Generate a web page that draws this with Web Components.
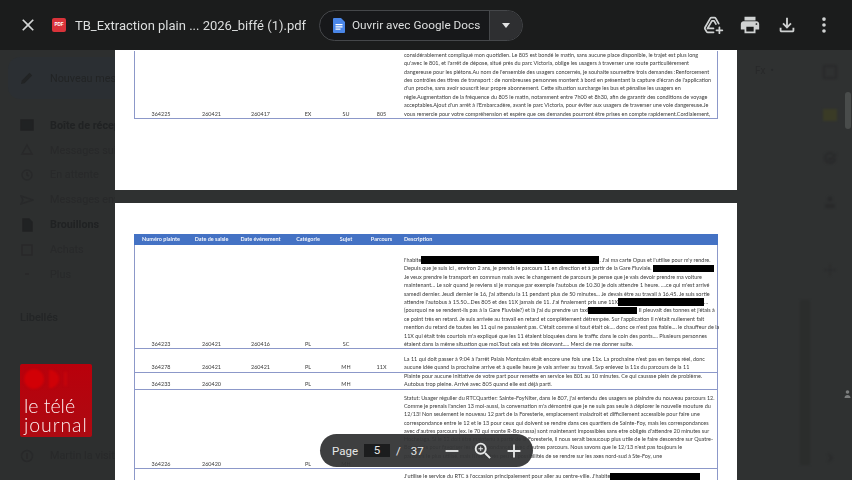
<!DOCTYPE html>
<html lang="fr">
<head>
<meta charset="utf-8">
<title>TB_Extraction</title>
<style>
  html, body { margin: 0; height: 480px; overflow: hidden; background: #2f3131; }
</style>
</head>
<body>
<pdf-app>
  <top-bar slot="top"></top-bar>
  <mail-sidebar slot="left"></mail-sidebar>
  <div slot="center">
    <pdf-page kind="first">
      <pdf-table>
        <pl-row a="364225" b="260421" c="260417" d="EX" e="SU" f="805" last>
          <div>considérablement compliqué mon quotidien. Le 805 est bondé le matin, sans aucune place disponible, le trajet est plus long</div>
          <div>qu'avec le 801, et l'arrêt de dépose, situé près du parc Victoria, oblige les usagers à traverser une route particulièrement</div>
          <div>dangereuse pour les piétons.Au nom de l'ensemble des usagers concernés, je souhaite soumettre trois demandes :Renforcement</div>
          <div>des contrôles des titres de transport : de nombreuses personnes montent à bord en présentant la capture d'écran de l'application</div>
          <div>d'un proche, sans avoir souscrit leur propre abonnement. Cette situation surcharge les bus et pénalise les usagers en</div>
          <div>règle.Augmentation de la fréquence du 805 le matin, notamment entre 7h00 et 8h30, afin de garantir des conditions de voyage</div>
          <div>acceptables.Ajout d'un arrêt à l'Embarcadère, avant le parc Victoria, pour éviter aux usagers de traverser une voie dangereuse.Je</div>
          <div>vous remercie pour votre compréhension et espère que ces demandes pourront être prises en compte rapidement.Cordialement,</div>
        </pl-row>
      </pdf-table>
    </pdf-page>
    <pdf-page kind="second">
      <pdf-table>
        <pl-head></pl-head>
        <pl-row a="364223" b="260421" c="260416" d="PL" e="SC" style="--top:11px">
          <div>l'habite<black-out w="178"></black-out>. J'ai ma carte Opus et l'utilise pour m'y rendre.</div>
          <div>Depuis que je suis ici , environ 2 ans, je prends le parcours 11 en direction et à partir de la Gare Fluviale. <black-out w="61"></black-out></div>
          <div>Je veux prendre le transport en commun mais avec le changement de parcours je pense que je vais devoir prendre ma voiture</div>
          <div>maintenant... Le soir quand je reviens si je manque par exemple l'autobus de 10.30 je dois attendre 1 heure. ....ce qui m'est arrivé</div>
          <div>samedi dernier. Jeudi dernier le 16, j'ai attendu la 11 pendant plus de 50 minutes... Je devais être au travail à 16.45. Je suis sortie</div>
          <div>attendre l'autobus à 15.50...Des 805 et des 11X jamais de 11. J'ai finalement pris une 11X<black-out w="86"></black-out>...</div>
          <div>(pourquoi ne se rendent-ils pas à la Gare Fluviale?) et là j'ai du prendre un taxi<black-out w="49"></black-out> Il pleuvait des tonnes et j'étais à</div>
          <div>ce point très en retard. Je suis arrivée au travail en retard et complètement détrempée. Sur l'application il n'était nullement fait</div>
          <div>mention du retard de toutes les 11 qui ne passaient pas. C'était comme si tout était ok.... donc ce n'est pas fiable.... le chauffeur de la</div>
          <div>11X qui était très courtois m'a expliqué que les 11 étaient bloquées dans le traffic dans le coin des ponts.... Plusieurs personnes</div>
          <div>étaient dans la même situation que moi.Tout cela est très décevant..... Merci de me donner suite.</div>
        </pl-row>
        <pl-row a="364278" b="260421" c="260421" d="PL" e="MH" f="11X" style="--top:7px;line-height:7.800px">
          <div>La 11 qui doit passer à 9:04 à l'arrêt Palais Montcalm était encore une fois une 11x. La prochaine n'est pas en temps réel, donc</div>
          <div>aucune idée quand la prochaine arrive et à quelle heure je vais arriver au travail. Svp enlevez la 11x du parcours de la 11</div>
        </pl-row>
        <pl-row a="364233" b="260420" d="PL" e="MH" style="line-height:7.800px">
          <div>Plainte pour aucune initiative de votre part pour remette en service les 801 au 10 minutes. Ce qui caussse plein de problème.</div>
          <div>Autobus trop pleine. Arrivé avec 805 quand elle est déjà parti.</div>
        </pl-row>
        <pl-row a="364226" b="260420" d="PL" e="MH" style="--top:4px;line-height:8.300px">
          <div>Statut: Usager régulier du RTCQuartier: Sainte-FoyNlter, dans le 807, j'ai entendu des usagers se plaindre du nouveau parcours 12.</div>
          <div>Comme je prenais l'ancien 13 moi-aussi, la conversation m'a démontré que je ne suis pas seule à déplorer le nouvelle mouture du</div>
          <div>12/13! Non seulement le nouveau 12 part de la Foresterie, emplacement maladroit et difficilement accessible pour faire une</div>
          <div>correspondance entre le 12 et le 13 pour ceux qui doivent se rendre dans ces quartiers de Sainte-Foy, mais les correspondances</div>
          <div>avec d'autres parcours (ex. le 70 qui monte R-Bourassa) sont maintenant impossibles sans etre obligés d'attendre 20 minutes sur</div>
          <div>Hochelaga. Si le 12 doit être maintenu à partir de la Foresterie, il nous serait beaucoup plus utile de le faire descendre sur Quatre-</div>
          <div>Bourgeois pour favoriser les correspondances avec d'autres parcours. Nous savons que le 12/13 n'est pas toujours le</div>
          <div>parcours le plus utilisé, mais il reste très peu de possibilités de se rendre sur les axes nord-sud à Ste-Foy, une</div>
          <div>&nbsp;</div>
        </pl-row>
        <pl-row style="--top:3px">
          <div>J'utilise le service du RTC à l'occasion principalement pour aller au centre-ville. J'habite<black-out w="90"></black-out></div>
        </pl-row>
      </pdf-table>
    </pdf-page>
  </div>
  <mail-rail slot="right"></mail-rail>
  <tele-logo slot="over"></tele-logo>
  <page-pill slot="over"></page-pill>
</pdf-app>

<script>
// petit helper pour les composants
function mount(el, html) {
  el.attachShadow({ mode: 'open' }).innerHTML = html;
}

class PdfApp extends HTMLElement {
  connectedCallback() {
    mount(this, `
      <style>
        :host { display: grid; grid-template: 50px 430px / 115px 622px 115px; width: 852px; height: 480px; position: relative; overflow: hidden; font-family: Roboto, sans-serif; }
        .top { grid-column: 1 / 4; display: block; }
        .center { display: block; overflow: hidden; }
      </style>
      <slot name="top" class="top"></slot>
      <slot name="left"></slot>
      <div class="center"><slot name="center"></slot></div>
      <slot name="right"></slot>
      <slot name="over"></slot>
    `);
  }
}

class TopBar extends HTMLElement {
  connectedCallback() {
    mount(this, `
      <style>
        :host { display: flex; align-items: center; height: 50px; box-sizing: border-box; background: #1b1c1c; color: #dcdede; padding-left: 18px; font: 13px Roboto, sans-serif; }
        svg { display: block; filter: blur(.35px); }
        .x { width: 20px; height: 20px; fill: #d4d6d6; margin-right: 14px; }
        .pdf { width: 14px; height: 14px; background: #d9333a; border-radius: 2px; color: #fff; font: bold 4.600px/14px "Liberation Sans", sans-serif; text-align: center; margin-right: 9px; }
        .name { width: 232px; white-space: nowrap; margin-right: 12px; filter: blur(.3px); }
        .open { display: flex; align-items: center; width: 204px; height: 31px; box-sizing: border-box; border: 1px solid #45474a; border-radius: 16px; overflow: hidden; background: #17181a; }
        .open .docs { width: 12px; height: 15px; margin-left: 13px; }
        .open span { margin-left: 7px; width: 130px; white-space: nowrap; font-size: 11.800px; filter: blur(.3px); }
        .caret { margin-left: auto; width: 33px; height: 100%; background: #2e2f31; display: flex; align-items: center; justify-content: center; border-left: 1px solid #45474a; box-sizing: border-box; }
        .caret i { border: 4.500px solid transparent; border-top: 5px solid #e1e3e3; border-bottom: 0; }
        .tools { margin-left: auto; display: flex; align-items: center; margin-right: 17px; }
        .tools svg { width: 22px; height: 22px; fill: #d0d2d2; }
        .tools svg + svg { margin-left: 15px; }
      </style>
      <svg class="x" viewBox="0 0 24 24"><path d="M19 6.410 17.590 5 12 10.590 6.410 5 5 6.410 10.590 12 5 17.590 6.410 19 12 13.410 17.590 19 19 17.590 13.410 12z"/></svg>
      <div class="pdf">PDF</div>
      <div class="name">TB_Extraction plain ... 2026_biffé (1).pdf</div>
      <div class="open">
        <svg class="docs" viewBox="0 0 12 15"><path fill="#4a86e8" d="M1 0h7l4 4v10a1 1 0 0 1-1 1H1a1 1 0 0 1-1-1V1a1 1 0 0 1 1-1z"/><path fill="#fff" d="M2.500 6h7v1.200h-7zM2.500 8.300h7v1.200h-7zM2.500 10.600h5v1.200h-5z"/></svg>
        <span>Ouvrir avec Google Docs</span>
        <div class="caret"><i></i></div>
      </div>
      <div class="tools">
        <svg viewBox="0 0 24 24" style="fill:none;stroke:#d0d2d2;stroke-width:1.900;stroke-linejoin:round;stroke-linecap:round"><path d="M12.600 20H6.400a1.600 1.600 0 0 1-1.400-.8L3.300 16.300a1.600 1.600 0 0 1 0-1.600L9 4.800a1.600 1.600 0 0 1 1.400-.8h3.200a1.600 1.600 0 0 1 1.400.8l3.200 5.700"/><path d="M6 15.800 10.800 7.500h2.400l2 3.500M6 15.800h6.500"/><path d="M19 14.500v6.500M15.800 17.800h6.400"/></svg>
        <svg viewBox="0 0 24 24"><path d="M19 8H5c-1.660 0-3 1.340-3 3v6h4v4h12v-4h4v-6c0-1.660-1.340-3-3-3zm-3 11H8v-5h8v5zm3-7c-.55 0-1-.45-1-1s.45-1 1-1 1 .45 1 1-.45 1-1 1zm-1-9H6v4h12V3z"/></svg>
        <svg viewBox="0 0 24 24"><path d="M12 16l-5-5 1.400-1.450 2.600 2.600V4h2v8.150l2.600-2.600L17 11l-5 5zm-6 4c-.55 0-1.020-.2-1.410-.59A1.930 1.930 0 0 1 4 18v-3h2v3h12v-3h2v3c0 .55-.2 1.020-.59 1.410-.39.39-.86.59-1.410.59H6z"/></svg>
        <svg viewBox="0 0 24 24"><circle cx="12" cy="5.500" r="2"/><circle cx="12" cy="12" r="2"/><circle cx="12" cy="18.500" r="2"/></svg>
      </div>
    `);
  }
}

class SideItem extends HTMLElement {
  connectedCallback() {
    const ic = this.getAttribute('icon') || '';
    mount(this, `
      <style>
        :host { display: flex; align-items: center; height: 24.800px; padding-left: 20px; white-space: nowrap; }
        svg { width: 14px; height: 14px; margin-right: 16px; flex: none; fill: none; stroke: currentColor; stroke-width: 1.500; }
        :host([strong]) { font-weight: 700; color: #202223; }
        :host([strong]) svg { fill: currentColor; }
      </style>
      <svg viewBox="0 0 14 14"><path d="${ic}"/></svg><slot></slot>
    `);
  }
}

class MailSidebar extends HTMLElement {
  connectedCallback() {
    mount(this, `
      <style>
        :host { display: block; background: #2d2f2f; color: #28292a; font: 10.800px Roboto, sans-serif; overflow: hidden; filter: blur(.7px); }
        .compose { height: 42px; margin: 7px 0 14px 8px; background: #2b2f33; border-radius: 12px 0 0 12px; display: flex; align-items: center; padding-left: 12px; white-space: nowrap; color: #222425; }
        .compose svg { width: 14px; height: 14px; margin-right: 16px; fill: currentColor; flex: none; }
        .lab { font-size: 11px; font-weight: 500; margin: 24px 0 0 20px; color: #232526; }
        .foot { margin-top: 120px; }
      </style>
      <div class="compose"><svg viewBox="0 0 14 14"><path d="M1 13l.8-3.500L9.500 1.800l2.700 2.700-7.700 7.700z"/></svg>Nouveau message</div>
      <side-item strong icon="M1 2h12v10H1z">Boîte de réception</side-item>
      <side-item icon="M7 2l5 9H2z">Messages suivis</side-item>
      <side-item icon="M2 7a5 5 0 1 0 10 0a5 5 0 1 0-10 0M7 4v3l2 1">En attente</side-item>
      <side-item icon="M1 3l12 4-12 4 2-4z">Messages envoyés</side-item>
      <side-item strong icon="M3 1h6l3 3v9H3z">Brouillons</side-item>
      <side-item icon="M2 3h10v10H2z">Achats</side-item>
      <side-item icon="M5 7h4">Plus</side-item>
      <div class="lab">Libellés</div>
      <div class="foot"><side-item icon="M1.500 7a5.500 5.500 0 1 0 11 0a5.500 5.500 0 1 0-11 0M7 4v6">Martin la visite</side-item></div>
    `);
  }
}

class MailRail extends HTMLElement {
  connectedCallback() {
    mount(this, `
      <style>
        :host { display: grid; grid-template-columns: 63px 10px 40px 2px; background: #2f3131; color: #28292a; position: relative; font: 10px Roboto, sans-serif; }
        .fx { padding: 15px 0 0 18px; filter: blur(.7px); }
        .band { margin-top: 250px; height: 165px; background: #2b2d2c; filter: blur(1px); }
        .icons { position: relative; display: flex; flex-direction: column; align-items: center; filter: blur(.8px); }
        .icons svg { width: 14px; height: 14px; display: block; fill: currentColor; flex: none; }
        .bar { position: absolute; left: 108px; top: 42px; width: 6px; height: 37px; border-radius: 3px; background: #494c4b; filter: blur(.4px); }
        .me { position: absolute; left: 107px; top: 340px; width: 7px; height: 8px; fill: #7c7e7e; filter: blur(.4px); }
      </style>
      <div class="fx">Fx &nbsp;•</div>
      <div class="band"></div>
      <div class="icons">
        <svg viewBox="0 0 14 14" style="margin-top:15px;fill:none;stroke:currentColor;stroke-width:1.500"><path d="M1 1h12v12H1z"/></svg>
        <svg viewBox="0 0 14 14" style="margin-top:29px;color:#3a3b26"><path d="M0 1h14v12H0z"/></svg>
        <svg viewBox="0 0 14 14" style="margin-top:29px;fill:none;stroke:currentColor;stroke-width:2"><path d="M12 7a5 5 0 1 1-2-4M5 7l2 2 6-6"/></svg>
        <svg viewBox="0 0 14 14" style="margin-top:30px"><circle cx="7" cy="4" r="2.500"/><path d="M2 13V9h10v4z"/></svg>
        <svg viewBox="0 0 14 14" style="margin-top:54px;fill:none;stroke:currentColor;stroke-width:1"><path d="M7 1v12M1 7h12"/></svg>
        <svg viewBox="0 0 14 14" style="margin-top:174px;fill:none;stroke:currentColor;stroke-width:1.500"><path d="M5 3l4 4-4 4"/></svg>
      </div>
      <div class="bar"></div>
      <svg class="me" viewBox="0 0 7 8"><circle cx="3.500" cy="2" r="1.800"/><path d="M.5 8c0-4 6-4 6 0z"/></svg>
    `);
  }
}

class PdfPage extends HTMLElement {
  connectedCallback() {
    mount(this, `
      <style>
        :host { display: flex; flex-direction: column; background: #fff; overflow: hidden; padding: 0 19px 0 19px; box-sizing: border-box; }
        :host([kind="first"]) { height: 140px; justify-content: flex-end; padding-bottom: 71px; margin-bottom: 13px; }
        :host([kind="second"]) { height: 277px; padding-top: 31px; }
      </style>
      <slot></slot>
    `);
  }
}

class PdfTable extends HTMLElement {
  connectedCallback() {
    mount(this, `
      <style>
        :host { display: block; flex: none; border: solid #8c98c9; border-width: 0 1px; font: 5.470px/8.400px Lato, sans-serif; color: #3a3a3a; white-space: nowrap; }
        div { filter: blur(.38px); }
      </style>
      <div><slot></slot></div>
    `);
  }
}

class PlHead extends HTMLElement {
  connectedCallback() {
    const cols = ['Numéro plainte', 'Date de saisie', 'Date événement', 'Catégorie', 'Sujet', 'Parcours', 'Description'];
    mount(this, `
      <style>
        :host { display: grid; grid-template-columns: 52px 49px 49px 46px 30px 41px 1fr; height: 11px; background: #4472c4; color: #f3f5fb; font-weight: 700; line-height: 11px; margin: 0 -1px; padding-left: 1px; }
        span { text-align: center; }
        span:last-child { text-align: left; padding-left: 2px; }
      </style>
      ${cols.map(c => `<span>${c}</span>`).join('')}
    `);
  }
}

class PlRow extends HTMLElement {
  connectedCallback() {
    const vals = ['a', 'b', 'c', 'd', 'e', 'f'].map(k => this.getAttribute(k) || '');
    mount(this, `
      <style>
        :host { display: grid; grid-template-columns: 52px 49px 49px 46px 30px 41px 1fr; align-items: end; border-bottom: 1px solid #8c98c9; }
        span { text-align: center; }
        .desc { padding: var(--top, 0) 0 0 2px; }
      </style>
      ${vals.map(v => `<span>${v}</span>`).join('')}
      <div class="desc"><slot></slot></div>
    `);
  }
}

class BlackOut extends HTMLElement {
  connectedCallback() {
    const w = this.getAttribute('w') || 40;
    mount(this, `
      <style>
        :host { display: inline-block; width: ${w}px; height: 7.500px; background: #000; vertical-align: -1.800px; }
      </style>
    `);
  }
}

class PagePill extends HTMLElement {
  connectedCallback() {
    mount(this, `
      <style>
        :host { position: absolute; left: 320px; top: 434px; width: 213px; height: 33px; box-sizing: border-box; border-radius: 17px; background: rgba(52,53,54,.95); color: #e6e8e8; display: flex; align-items: center; padding-left: 12px; font: 11.500px Roboto, sans-serif; }
        .n { width: 26px; height: 13px; background: #1c1d1e; margin-left: 6px; text-align: center; line-height: 13px; }
        .s { margin-left: 6px; }
        .t { margin-left: 10px; }
        svg { width: 22px; height: 22px; fill: #e6e8e8; position: absolute; top: 5.500px; }
      </style>
      <span>Page</span>
      <span class="n">5</span>
      <span class="s">/</span>
      <span class="t">37</span>
      <svg viewBox="0 0 24 24" style="left:121px"><path d="M5 11h14v2H5z"/></svg>
      <svg viewBox="0 0 24 24" style="left:152px"><path d="M15.500 14h-.79l-.28-.27A6.470 6.470 0 0 0 16 9.500 6.500 6.500 0 1 0 9.500 16c1.610 0 3.090-.59 4.230-1.570l.27.28v.79l5 4.990L20.490 19l-4.990-5zm-6 0C7.010 14 5 11.990 5 9.500S7.010 5 9.500 5 14 7.010 14 9.500 11.990 14 9.500 14z"/><path d="M10 7H9v2H7v1h2v2h1v-2h2V9h-2z"/></svg>
      <svg viewBox="0 0 24 24" style="left:183px"><path d="M19 13h-6v6h-2v-6H5v-2h6V5h2v6h6z"/></svg>
    `);
  }
}

class TeleLogo extends HTMLElement {
  connectedCallback() {
    mount(this, `
      <style>
        :host { position: absolute; left: 20px; top: 364px; width: 72px; height: 73px; border-radius: 2px; background: linear-gradient(#b9000b, #ad0a12); color: #fbeeee; font: 300 19.500px/19px Lato, sans-serif; display: flex; flex-direction: column; box-sizing: border-box; padding: 5px 0 0 4px; overflow: hidden; }
        svg { width: 46px; height: 20px; display: block; margin-bottom: 7px; filter: blur(.8px); }
        .l { white-space: nowrap; filter: blur(.25px); }
        .j { letter-spacing: .9px; }
      </style>
      <svg viewBox="0 0 46 20"><circle cx="10" cy="10" r="10" fill="#d20006"/><path d="M26 1a9 9 0 0 1 0 18z" fill="#cf0107"/><path d="M25 1h4v18h-4z" fill="#cf0107"/><rect x="40" y="3" width="3" height="14" fill="#c5040b"/></svg>
      <div class="l">le télé</div>
      <div class="l j">journal</div>
    `);
  }
}

customElements.define('pdf-app', PdfApp);
customElements.define('top-bar', TopBar);
customElements.define('side-item', SideItem);
customElements.define('mail-sidebar', MailSidebar);
customElements.define('mail-rail', MailRail);
customElements.define('pdf-page', PdfPage);
customElements.define('pdf-table', PdfTable);
customElements.define('pl-head', PlHead);
customElements.define('pl-row', PlRow);
customElements.define('black-out', BlackOut);
customElements.define('page-pill', PagePill);
customElements.define('tele-logo', TeleLogo);
</script>
</body>
</html>
